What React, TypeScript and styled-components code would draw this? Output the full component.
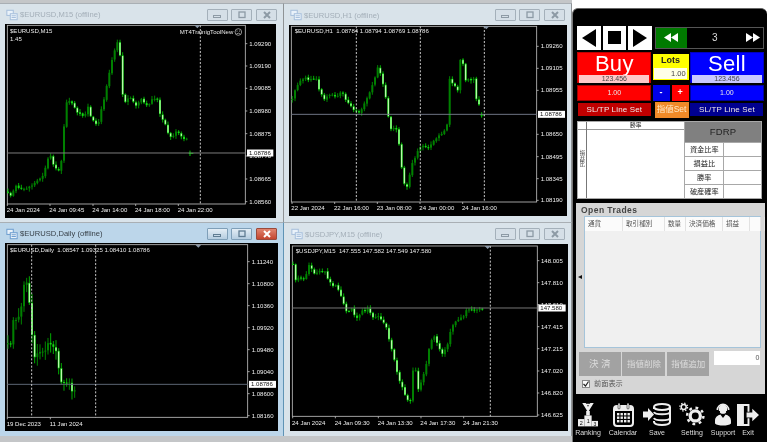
import React from "react";
import styled, { createGlobalStyle } from "styled-components";

const Global = createGlobalStyle`
  html, body { margin: 0; padding: 0; background: #c4c6c8; }
  * { box-sizing: border-box; }
`;

const CJK = `"Liberation Sans", "Noto Sans CJK JP", sans-serif`;

const Page = styled.div`
  width: 768px;
  height: 442px;
  display: flex;
  overflow: hidden;
  filter: blur(0.28px);
  font-family: ${CJK};
  background: #c4c6c8;
`;

const Workspace = styled.div`
  width: 572px;
  display: grid;
  grid-template-columns: 284px 288px;
  grid-template-rows: 219px 214px;
  padding-top: 3px;
  background: #c4c6c8;
  align-content: start;
`;

const Win = styled.div<{ $active?: boolean; $left: number }>`
  display: flex;
  flex-direction: column;
  padding-left: ${(p) => p.$left}px;
  background: ${(p) => (p.$active ? "#bcd6ea" : "#d9e3ea")};
  border-right: 1px solid ${(p) => (p.$active ? "#5f93b5" : "#8f9396")};
  border-top: 1px solid #a9afb4;
`;

const TitleBar = styled.div<{ $h: number }>`
  height: ${(p) => p.$h}px;
  display: flex;
  align-items: center;
  gap: 2px;
  padding: 1px 6px 0 1px;
  flex: none;
`;

const TitleText = styled.span<{ $active?: boolean }>`
  font-size: 7.6px;
  color: ${(p) => (p.$active ? "#39424a" : "#a3aeb8")};
  flex: 1;
  white-space: nowrap;
`;

const WinBtn = styled.div<{ $close?: boolean; $active?: boolean }>`
  width: 21px;
  height: 12px;
  margin-left: 1.7px;
  border: 1px solid ${(p) => (p.$close ? "#9a4a3c" : p.$active ? "#7f9fb8" : "#a4b0ba")};
  border-radius: 1px;
  background: ${(p) =>
    p.$close ? "linear-gradient(#e0846f, #c4452f)" : p.$active ? "linear-gradient(#e3edf5, #b5cde0)" : "#d5dfe7"};
  display: flex;
  align-items: center;
  justify-content: center;
`;

const ChartSvg = styled.svg`
  display: block;
  flex: none;
  background: #000;
`;

type Pt = [number, number];
type ChartDef = {
  title: string;
  active?: boolean;
  left: number;
  titleH: number;
  view: [number, number, number, number];
  plot: [number, number, number, number];
  labels: [number, string][];
  labelX: number;
  ask: [number, number, string];
  askX: [number, number];
  dots: number[];
  tri: number;
  head: [number, number, string];
  times: [number, string][];
  timeY: number;
  pts: Pt[];
  tiny?: Pt;
  extra?: boolean;
  hline: string;
  wick?: number;
};

function rng(seed: number) {
  let s = seed;
  return () => {
    s = (s * 9301 + 49297) % 233280;
    return s / 233280;
  };
}

function candles(pts: Pt[], seed: number, wick: number) {
  const r = rng(seed);
  const out: { x: number; o: number; c: number; h: number; l: number }[] = [];
  const yAt = (x: number) => {
    for (let i = 1; i < pts.length; i++) {
      if (x <= pts[i][0]) {
        const [x0, y0] = pts[i - 1];
        const [x1, y1] = pts[i];
        return y0 + ((y1 - y0) * (x - x0)) / (x1 - x0 || 1);
      }
    }
    return pts[pts.length - 1][1];
  };
  const end = pts[pts.length - 1][0];
  let prev = yAt(pts[0][0]);
  for (let x = pts[0][0]; x <= end; x += 8) {
    const target = yAt(x) + (r() - 0.5) * 9;
    const top = Math.min(prev, target);
    const bot = Math.max(prev, target);
    out.push({ x, o: prev, c: target, h: top - (2 + r() * 8) * wick, l: bot + (2 + r() * 8) * wick });
    prev = target + (r() - 0.5) * 3;
  }
  return out;
}

const Chart = ({ d, seed }: { d: ChartDef; seed: number }) => {
  const [vx, vy, vw, vh] = d.view;
  const [px0, py0, px1, py1] = d.plot;
  const cs = candles(d.pts, seed, d.wick ?? 1);
  const askY = d.ask[0];
  return (
    <ChartSvg width={vw / 3} height={vh / 3} viewBox={`${vx} ${vy} ${vw} ${vh}`} fontFamily="Liberation Sans, sans-serif" fontSize="18.2">
      <rect x={px0} y={py0} width={px1 - px0} height={py1 - py0} fill="none" stroke="#b8b8b8" strokeWidth="2.6" />
      {cs.map((c, i) => {
        const up = c.c < c.o;
        const t = Math.min(c.o, c.c);
        const h = Math.max(Math.abs(c.c - c.o), 3);
        return (
          <g key={i}>
            <line x1={c.x} x2={c.x} y1={c.h} y2={c.l} stroke={up ? "#009a00" : "#00c800"} strokeWidth="2.6" />
            <rect x={c.x - 3} y={t} width="6" height={h} fill={up ? "#008000" : "#14d814"} />
            {!up && h > 8 && <rect x={c.x - 1.5} y={t + 2} width="3" height={h - 4} fill="#d8ffc8" />}
          </g>
        );
      })}
      {d.tiny && (
        <g>
          <line x1={d.tiny[0]} x2={d.tiny[0]} y1={d.tiny[1] - 8} y2={d.tiny[1] + 8} stroke="#00d000" strokeWidth="3" />
          <line x1={d.tiny[0] - 4} x2={d.tiny[0] + 10} y1={d.tiny[1]} y2={d.tiny[1]} stroke="#00d000" strokeWidth="3" />
        </g>
      )}
      <line x1={px0} x2={px1} y1={askY} y2={askY} stroke={d.hline} strokeWidth="3" />
      {d.dots.map((x) => (
        <line key={x} x1={x} x2={x} y1={py0} y2={py1} stroke="#c8c8c8" strokeWidth="3" strokeDasharray="6 5" />
      ))}
      <polygon points={`${d.tri - 9},${py0} ${d.tri + 9},${py0} ${d.tri},${py0 + 9}`} fill="#8a98a8" />
      {d.labels.map(([y, t]) => (
        <g key={t}>
          <line x1={px1} x2={px1 + 6} y1={y} y2={y} stroke="#b8b8b8" strokeWidth="2.6" />
          <text x={d.labelX} y={y + 6} fill="#f0f0f0">{t}</text>
        </g>
      ))}
      <rect x={d.askX[0]} y={askY - 10.5} width={d.askX[1] - d.askX[0]} height="21" fill="#fff" />
      <text x={d.askX[0] + 6} y={askY + 6} fill="#111">{d.ask[2]}</text>
      {d.times.map(([x, t]) => (
        <g key={t}>
          <line x1={x + 2} x2={x + 2} y1={py1} y2={py1 + 6} stroke="#b8b8b8" strokeWidth="2.6" />
          <text x={x} y={d.timeY} fill="#f0f0f0">{t}</text>
        </g>
      ))}
      <text x={d.head[0]} y={d.head[1]} fill="#e8e8e8" xmlSpace="preserve">{d.head[2]}</text>
      {d.extra && (
        <g fill="#e8e8e8">
          <text x="30" y="124">1.45</text>
          <text x="700" y="101" textAnchor="end">MT4TrainigToolNew</text>
          <circle cx="715" cy="96" r="10" fill="none" stroke="#d0d0d0" strokeWidth="2" />
          <circle cx="711" cy="93" r="1.5" />
          <circle cx="719" cy="93" r="1.5" />
          <path d="M709 102q6-5 12 0" fill="none" stroke="#d0d0d0" strokeWidth="2" />
        </g>
      )}
    </ChartSvg>
  );
};

const charts: ChartDef[] = [
  {
    title: "$EURUSD,M15 (offline)", left: 5, titleH: 20,
    view: [15, 72, 813, 583], plot: [22, 76, 736, 612], labelX: 748,
    labels: [[131, "1.09290"], [198, "1.09190"], [265, "1.09085"], [333, "1.08980"], [401, "1.08875"], [468, "1.08770"], [537, "1.08665"], [605, "1.08560"]],
    ask: [459, 0, "1.08786"], askX: [741, 820], dots: [601], tri: 592,
    head: [30, 98, "$EURUSD,M15"], timeY: 637,
    times: [[20, "24 Jan 2024"], [148, "24 Jan 09:45"], [277, "24 Jan 14:00"], [405, "24 Jan 18:00"], [533, "24 Jan 22:00"]],
    pts: [[24, 575], [35, 587], [45, 555], [60, 572], [90, 560], [110, 545], [128, 525], [140, 490], [150, 460], [160, 490], [168, 510], [175, 515], [184, 480], [190, 395], [200, 310], [215, 305], [230, 340], [250, 350], [265, 320], [275, 365], [295, 370], [300, 350], [312, 295], [325, 230], [338, 170], [350, 125], [358, 125], [366, 280], [378, 310], [390, 285], [405, 320], [425, 300], [440, 320], [455, 300], [470, 290], [480, 345], [495, 375], [510, 415], [520, 405], [532, 395], [545, 415], [560, 420]],
    tiny: [570, 460], extra: true, hline: "#7c7c7c",
  },
  {
    title: "$EURUSD,H1 (offline)", left: 5, titleH: 21,
    view: [28, 75, 834, 573], plot: [35, 79, 771, 606], labelX: 783,
    labels: [[139, "1.09260"], [205, "1.09105"], [271, "1.08955"], [403, "1.08650"], [470, "1.08495"], [536, "1.08345"], [601, "1.08190"]],
    ask: [343, 0, "1.08786"], askX: [775, 856], dots: [230, 422, 614], tri: 620,
    head: [45, 100, "$EURUSD,H1  1.08784 1.08794 1.08769 1.08786"], timeY: 631,
    times: [[35, "22 Jan 2024"], [163, "22 Jan 16:00"], [291, "23 Jan 08:00"], [419, "24 Jan 00:00"], [547, "24 Jan 16:00"]],
    pts: [[38, 300], [50, 260], [70, 235], [90, 240], [108, 232], [120, 275], [135, 300], [150, 285], [170, 290], [185, 270], [200, 300], [215, 325], [240, 340], [255, 310], [275, 270], [295, 200], [310, 250], [320, 300], [330, 385], [350, 390], [360, 440], [370, 540], [380, 565], [395, 500], [415, 450], [430, 435], [445, 440], [465, 420], [490, 395], [505, 370], [510, 235], [525, 260], [535, 270], [545, 140], [555, 240], [570, 240], [582, 240], [590, 300], [598, 315]],
    tiny: [606, 345], hline: "#6e7484",
  },
  {
    title: "$EURUSD,Daily (offline)", active: true, left: 5, titleH: 20, wick: 3,
    view: [15, 68, 820, 565], plot: [22, 73, 743, 591], labelX: 755,
    labels: [[124, "1.11240"], [190, "1.10800"], [256, "1.10360"], [322, "1.09920"], [388, "1.09480"], [454, "1.09040"], [520, "1.08600"], [586, "1.08160"]],
    ask: [492, 0, "1.08786"], askX: [747, 828], dots: [95, 287], tri: 595,
    head: [30, 96, "$EURUSD,Daily  1.08547 1.09325 1.08410 1.08786"], timeY: 616,
    times: [[20, "19 Dec 2023"], [149, "11 Jan 2024"]],
    pts: [[24, 370], [35, 370], [40, 300], [55, 290], [62, 280], [72, 190], [80, 190], [88, 250], [95, 330], [102, 410], [112, 400], [125, 395], [135, 395], [145, 370], [158, 375], [168, 390], [175, 430], [180, 490], [195, 490], [205, 480], [215, 510], [225, 510]],
    hline: "#5c6674",
  },
  {
    title: "$USDJPY,M15 (offline)", left: 6, titleH: 21,
    view: [31, 70, 833, 560], plot: [38, 76, 773, 587], labelX: 784,
    labels: [[120, "148.005"], [186, "147.810"], [252, "147.610"], [318, "147.415"], [384, "147.215"], [451, "147.020"], [517, "146.820"], [583, "146.625"]],
    ask: [262, 0, "147.580"], askX: [776, 858], dots: [632], tri: 624,
    head: [48, 97, "$USDJPY,M15  147.555 147.582 147.549 147.580"], timeY: 612,
    times: [[37, "24 Jan 2024"], [165, "24 Jan 09:30"], [294, "24 Jan 13:30"], [422, "24 Jan 17:30"], [550, "24 Jan 21:30"]],
    pts: [[40, 130], [48, 175], [65, 170], [75, 180], [90, 130], [105, 160], [120, 155], [135, 155], [155, 195], [165, 190], [180, 215], [190, 240], [200, 275], [215, 260], [230, 295], [245, 275], [265, 265], [280, 290], [300, 290], [318, 315], [330, 365], [345, 420], [355, 465], [370, 510], [385, 545], [392, 545], [403, 410], [415, 510], [425, 480], [438, 440], [450, 370], [465, 345], [480, 385], [490, 400], [505, 370], [515, 325], [535, 295], [552, 285], [560, 265], [580, 265], [600, 262], [610, 265]],
    hline: "#767676",
  },
];

const AppIcon = ({ active }: { active?: boolean }) => (
  <svg width="12" height="12" viewBox="0 0 14 14" fill="none" stroke={active ? "#6f9fd0" : "#a8c0dc"} strokeWidth="1.2" style={{ flex: "none" }}>
    <rect x="1" y="1.5" width="7.5" height="6" fill="#eaf2fa" />
    <rect x="5" y="5.5" width="8" height="7" fill="#eaf2fa" />
    <path d="M6.5 8h5M6.5 10h5" />
  </svg>
);

const Glyph = ({ kind, active }: { kind: "min" | "max" | "close"; active?: boolean }) => {
  const c = kind === "close" && active ? "#fff" : active ? "#5f7c92" : "#8d9aa5";
  return (
    <svg width="10" height="8" viewBox="0 0 10 8">
      {kind === "min" && <rect x="1.5" y="4.5" width="7" height="2" fill="none" stroke={c} />}
      {kind === "max" && <rect x="2" y="1" width="6" height="5.5" fill="none" stroke={c} strokeWidth="1.3" />}
      {kind === "close" && <path d="M2 1l6 6M8 1L2 7" stroke={c} strokeWidth="2" />}
    </svg>
  );
};

/* ---------- side panel ---------- */

const Side = styled.div`
  width: 196px;
  height: 442px;
  background: #fff;
  padding-top: 8px;
  flex: none;
`;

const Panel = styled.div`
  width: 195px;
  height: 434px;
  background: #000;
  border-radius: 6px 6px 0 0;
  border-left: 1px solid #777;
  border-top: 1px solid #666;
  padding: 16px 3px 0 4px;
  display: flex;
  flex-direction: column;
`;

const Transport = styled.div`
  display: flex;
  align-items: center;
  gap: 1.6px;
  height: 25px;
  padding-left: 0.3px;
`;

const TBtn = styled.button`
  width: 24px;
  height: 24px;
  padding: 0;
  border: none;
  background: #fff;
  display: flex;
  align-items: center;
  justify-content: center;
`;

const Seek = styled.div`
  margin-left: 1.5px;
  width: 110.5px;
  height: 22px;
  border: 1px solid #555;
  display: flex;
  align-items: center;
  background: #000;
`;

const SeekGreen = styled.div`
  width: 31px;
  height: 100%;
  background: #007a00;
  display: flex;
  align-items: center;
  justify-content: center;
`;

const SeekNum = styled.div`
  flex: 1;
  text-align: center;
  color: #ddd;
  font-size: 10px;
`;

const SeekEnd = styled.div`
  width: 20px;
  display: flex;
  align-items: center;
  justify-content: center;
`;

const Trade = styled.div`
  margin-top: 2px;
  display: grid;
  grid-template-columns: 74px 36px 74px;
  grid-template-rows: 31px 16px 14px;
  column-gap: 1.3px;
  row-gap: 2px;
  padding-left: 0.3px;
`;

const BigBtn = styled.div<{ $bg: string; $soft: string }>`
  background: ${(p) => p.$bg};
  display: flex;
  flex-direction: column;
  align-items: stretch;
  padding: 0 1px 0.5px;
  border: 0.5px solid ${(p) => p.$soft};
`;

const BigLabel = styled.div`
  flex: 1;
  color: #fff;
  font-size: 22px;
  line-height: 22px;
  letter-spacing: 0.3px;
  text-align: center;
`;

const Quote = styled.div<{ $bg: string }>`
  height: 8px;
  line-height: 8px;
  background: ${(p) => p.$bg};
  color: #444;
  font-size: 7px;
  text-align: center;
`;

const Lots = styled.div`
  margin: 2px 0 3px;
  background: #ffff00;
  padding: 1px 1.5px;
  display: flex;
  flex-direction: column;
`;

const LotsLabel = styled.div`
  flex: 1;
  font-size: 9px;
  font-weight: bold;
  line-height: 11px;
  text-align: center;
  color: #222;
`;

const LotsValue = styled.div`
  height: 11px;
  line-height: 11px;
  background: #ffffe8;
  font-size: 7.5px;
  text-align: right;
  padding-right: 1.5px;
  color: #444;
`;

const Amount = styled.div<{ $bg: string; $line: string }>`
  background: ${(p) => p.$bg};
  border: 1px solid ${(p) => p.$line};
  color: #e8e8e8;
  font-size: 7px;
  text-align: center;
  line-height: 14px;
`;

const Steps = styled.div`
  display: flex;
  justify-content: space-between;
`;

const Step = styled.div<{ $bg: string }>`
  width: 17px;
  background: ${(p) => p.$bg};
  color: #fff;
  font-size: 9px;
  font-weight: bold;
  text-align: center;
  line-height: 15px;
`;

const LineSet = styled.div<{ $bg: string }>`
  background: ${(p) => p.$bg};
  color: #f0e8e8;
  font-size: 8px;
  letter-spacing: 0.15px;
  line-height: 13px;
  text-align: center;
  margin: 0 0.5px 1px;
  white-space: nowrap;
`;

const OrangeSet = styled.div`
  margin: -1px 0 -1px 2px;
  background: #f08a28;
  color: #ffe9c8;
  font-size: 8.5px;
  line-height: 15px;
  text-align: center;
  white-space: nowrap;
  overflow: hidden;
`;

const Stats = styled.div`
  margin: 3.5px 0 0 0.3px;
  width: 184.5px;
  height: 78px;
  background: #a8a8a8;
  display: flex;
  gap: 1px;
  padding: 1px;
`;

const Matrix = styled.div`
  width: 106px;
  background: #fff;
  display: grid;
  grid-template-columns: 8px 1px 1fr;
  grid-template-rows: 7px 1px 1fr;
`;

const MatrixHead = styled.div`
  grid-column: 3;
  font-size: 5.7px;
  line-height: 7px;
  text-align: center;
  color: #222;
`;

const MatrixRule = styled.div`
  grid-column: 1 / 4;
  grid-row: 2;
  background: #999;
`;

const MatrixSide = styled.div`
  grid-column: 1;
  grid-row: 3;
  font-size: 5.2px;
  line-height: 5.5px;
  color: #333;
  display: flex;
  align-items: center;
  justify-content: center;
  text-align: center;
  padding-bottom: 8px;
`;

const MatrixBar = styled.div`
  grid-column: 2;
  grid-row: 1 / 4;
  background: #777;
`;

const Metrics = styled.div`
  flex: 1;
  display: flex;
  flex-direction: column;
  gap: 1px;
`;

const Fdrp = styled.div`
  height: 20.5px;
  background: #808080;
  color: #222;
  font-size: 9.5px;
  text-align: center;
  line-height: 20.5px;
  letter-spacing: 0.2px;
`;

const MetricRow = styled.div`
  flex: 1;
  display: grid;
  grid-template-columns: 38px 1fr;
  gap: 1px;
`;

const MetricName = styled.div`
  background: #fff;
  font-size: 7.2px;
  color: #222;
  display: flex;
  align-items: center;
  justify-content: center;
`;

const MetricValue = styled.div`
  background: #fff;
`;

const Orders = styled.div`
  margin: 4.5px 0 0 -1px;
  width: 189px;
  height: 191px;
  background: #d6d6d6;
  padding: 1.5px 4px 0 2px;
  display: flex;
  flex-direction: column;
`;

const OrdersTitle = styled.div`
  font-size: 8.5px;
  font-weight: bold;
  color: #444;
  letter-spacing: 0.45px;
  line-height: 11px;
  padding-left: 3px;
`;

const ListWrap = styled.div`
  position: relative;
  margin-left: 6px;
  height: 132.5px;
  border: 1px solid #a5c4da;
  background: #f0f0f0;
`;

const ListArrow = styled.div`
  position: absolute;
  left: -7px;
  top: 58px;
  width: 0;
  height: 0;
  border: 2.5px solid transparent;
  border-right: 4px solid #111;
  border-left: none;
`;

const ListHead = styled.div`
  height: 14px;
  background: #fbfbfb;
  display: grid;
  grid-template-columns: 38px 42px 21px 37px 27px 11px 1fr;
`;

const ListCol = styled.div`
  border-right: 1px solid #e2e2e2;
  font-size: 6.6px;
  line-height: 14px;
  color: #555;
  text-align: left;
  padding-left: 3px;
  white-space: nowrap;
  overflow: hidden;
`;

const ActionRow = styled.div`
  margin-top: 3.5px;
  display: flex;
  align-items: flex-start;
  padding-left: 0.5px;
`;

const Action = styled.div<{ $w: number; $wide?: boolean }>`
  width: ${(p) => p.$w}px;
  height: 24px;
  margin-right: 1.4px;
  background: #a2a2a2;
  color: #dcdcdc;
  font-size: ${(p) => (p.$wide ? 9.5 : 8.5)}px;
  line-height: 24px;
  text-align: center;
  white-space: pre;
`;

const Qty = styled.div`
  margin: -1px 0 0 3.5px;
  width: 46px;
  height: 14px;
  background: #fff;
  color: #555;
  font-size: 7px;
  text-align: right;
  line-height: 13px;
  padding-right: 1px;
`;

const Front = styled.label`
  margin-top: 4px;
  padding-left: 4px;
  display: flex;
  align-items: center;
  gap: 4px;
  font-size: 7.2px;
  line-height: 8px;
  color: #555;
`;

const Check = styled.span`
  width: 8px;
  height: 8px;
  background: #fafafa;
  border: 1px solid #888;
  display: flex;
  align-items: center;
  justify-content: center;
`;

const Dock = styled.div`
  margin-top: 7px;
  margin-left: -1px;
  display: grid;
  grid-template-columns: 24px 46px 22px 48px 14px 36px;
  height: 38px;
`;

const DockItem = styled.div`
  display: flex;
  flex-direction: column;
  align-items: center;
  justify-content: flex-end;
  height: 36px;
  min-width: 0;
`;

const DockLabel = styled.div`
  color: #ddd;
  font-size: 7px;
  line-height: 9px;
  white-space: nowrap;
  flex: none;
`;

const DockSlot = styled.div`
  flex: 1;
  display: flex;
  align-items: center;
  justify-content: center;
  width: 0;
  overflow: visible;
`;

const RankIcon = () => (
  <svg width="20" height="24" viewBox="0 0 22 25" style={{ flex: "none" }} fill="#eee">
    <path d="M6 0l5 8 5-8h-2l-3 5-3-5zM7 1h8l-4 6z" fill="none" stroke="#eee" strokeWidth="1.5" />
    <rect x="9" y="8" width="4" height="5" />
    <rect x="7" y="13" width="8" height="12" />
    <rect x="0" y="17" width="7" height="8" />
    <rect x="15" y="19" width="7" height="6" />
    <text x="2" y="23.5" fontSize="6" fill="#000" fontFamily="Liberation Sans">2</text>
    <text x="9.5" y="21" fontSize="6" fill="#000" fontFamily="Liberation Sans">1</text>
    <text x="17" y="24.5" fontSize="5.5" fill="#000" fontFamily="Liberation Sans">3</text>
  </svg>
);

const CalIcon = () => (
  <svg width="21" height="24" viewBox="0 0 21 24" style={{ flex: "none" }}>
    <rect x="1" y="3" width="19" height="20" rx="3" fill="none" stroke="#eee" strokeWidth="2" />
    <rect x="1" y="3" width="19" height="5" fill="#eee" />
    <rect x="5" y="0" width="2" height="6" rx="1" fill="#eee" stroke="#000" strokeWidth=".5" />
    <rect x="14" y="0" width="2" height="6" rx="1" fill="#eee" stroke="#000" strokeWidth=".5" />
    {[10, 13.5, 17].map((y) =>
      [4, 7.5, 11, 14.5].map((x) => <rect key={`${x}${y}`} x={x} y={y} width="2.4" height="2.4" fill="#eee" />)
    )}
  </svg>
);

const SaveIcon = () => (
  <svg width="28" height="23" viewBox="0 0 28 23" style={{ flex: "none" }}>
    <g fill="none" stroke="#eee" strokeWidth="2">
      <ellipse cx="19" cy="4" rx="8" ry="3" />
      <path d="M11 9c1 3 15 3 16 0M11 15c1 3 15 3 16 0M11 4v2M27 4v15c-1 4-15 4-16 0v-1" />
    </g>
    <path d="M0 8.5h5V5l6 6.5-6 6.5v-3.5H0z" fill="#eee" />
  </svg>
);

const GearIcon = () => (
  <svg width="27" height="25" viewBox="0 0 28 27" style={{ flex: "none" }} fill="none" stroke="#eee">
    <circle cx="4.5" cy="5.5" r="2.7" strokeWidth="1.6" />
    <circle cx="4.5" cy="5.5" r="4.2" strokeWidth="1.4" strokeDasharray="1.5 1.8" />
    <circle cx="17" cy="15" r="5.5" strokeWidth="3.5" />
    <circle cx="17" cy="15" r="8.8" strokeWidth="2.6" strokeDasharray="3 3.9" />
  </svg>
);

const SupportIcon = () => (
  <svg width="18" height="24" viewBox="0 0 20 27" style={{ flex: "none" }}>
    <circle cx="10" cy="6.5" r="5" fill="#eee" />
    <path d="M3.5 8a6.5 6.5 0 0 1 13 0" fill="none" stroke="#eee" strokeWidth="1.6" />
    <path d="M3 9h14v2H3z" fill="#000" />
    <ellipse cx="10" cy="10" rx="3.5" ry="2" fill="#eee" />
    <path d="M1 20c0-4 3-6 6-7l3 4 3-4c3 1 6 3 6 7v3c-3 3-15 3-18 0z" fill="#eee" />
  </svg>
);

const ExitIcon = () => (
  <svg width="22" height="22" viewBox="0 0 23 23" style={{ flex: "none" }} fill="#eee">
    <path d="M0 0h13v8h-2V2H7v19h4v-6h2v8H0z" />
    <path d="M0 0l7 2v21l-7-2z" />
    <path d="M10 9h6V5l7 6.5-7 6.5v-4h-6z" />
  </svg>
);

const Tri = ({ dir }: { dir: "l" | "r" }) => (
  <svg width="16" height="18" viewBox="0 0 16 18">
    <polygon points={dir === "l" ? "15,0 15,18 1,9" : "1,0 1,18 15,9"} fill="#000" />
  </svg>
);

const Dbl = ({ dir }: { dir: "l" | "r" }) => (
  <svg width="14" height="9" viewBox="0 0 14 9">
    <polygon points={dir === "l" ? "7,0 7,9 0,4.5" : "0,0 0,9 7,4.5"} fill="#fff" />
    <polygon points={dir === "l" ? "14,0 14,9 7,4.5" : "7,0 7,9 14,4.5"} fill="#fff" />
  </svg>
);

const dock: [string, React.ReactNode][] = [
  ["Ranking", <RankIcon />],
  ["Calendar", <CalIcon />],
  ["Save", <SaveIcon />],
  ["Setting", <GearIcon />],
  ["Support", <SupportIcon />],
  ["Exit", <ExitIcon />],
];

const cols = ["通貨", "取引種別", "数量", "決済価格", "損益", "", ""];
const metrics = ["資金比率", "損益比", "勝率", "破産確率"];

export default function App() {
  return (
    <>
      <Global />
      <Page>
        <Workspace>
          {charts.map((d, i) => (
            <Win key={d.title} $active={d.active} $left={d.left}>
              <TitleBar $h={d.titleH}>
                <AppIcon active={d.active} />
                <TitleText $active={d.active}>{d.title}</TitleText>
                <WinBtn $active={d.active}><Glyph kind="min" active={d.active} /></WinBtn>
                <WinBtn $active={d.active}><Glyph kind="max" active={d.active} /></WinBtn>
                <WinBtn $active={d.active} $close={d.active}><Glyph kind="close" active={d.active} /></WinBtn>
              </TitleBar>
              <Chart d={d} seed={17 + i * 31} />
            </Win>
          ))}
        </Workspace>
        <Side>
          <Panel>
            <Transport>
              <TBtn><Tri dir="l" /></TBtn>
              <TBtn><svg width="13" height="13"><rect width="13" height="13" fill="#000" /></svg></TBtn>
              <TBtn><Tri dir="r" /></TBtn>
              <Seek>
                <SeekGreen><Dbl dir="l" /></SeekGreen>
                <SeekNum>3</SeekNum>
                <SeekEnd><Dbl dir="r" /></SeekEnd>
              </Seek>
            </Transport>
            <Trade>
              <BigBtn $bg="#ff0000" $soft="#c00000">
                <BigLabel>Buy</BigLabel>
                <Quote $bg="#ffc8c8">123.456</Quote>
              </BigBtn>
              <Lots>
                <LotsLabel>Lots</LotsLabel>
                <LotsValue>1.00</LotsValue>
              </Lots>
              <BigBtn $bg="#0000ff" $soft="#0000c0">
                <BigLabel>Sell</BigLabel>
                <Quote $bg="#c8c8ff">123.456</Quote>
              </BigBtn>
              <Amount $bg="#ff0000" $line="#a00000">1.00</Amount>
              <Steps>
                <Step $bg="#0000e8">-</Step>
                <Step $bg="#ff0000">+</Step>
              </Steps>
              <Amount $bg="#0000ff" $line="#0000a0">1.00</Amount>
              <LineSet $bg="#c00000">SL/TP Line Set</LineSet>
              <OrangeSet>指値Set</OrangeSet>
              <LineSet $bg="#000090">SL/TP Line Set</LineSet>
            </Trade>
            <Stats>
              <Matrix>
                <MatrixHead>勝率</MatrixHead>
                <MatrixRule />
                <MatrixSide>損<br />益<br />比</MatrixSide>
                <MatrixBar />
              </Matrix>
              <Metrics>
                <Fdrp>FDRP</Fdrp>
                {metrics.map((m) => (
                  <MetricRow key={m}>
                    <MetricName>{m}</MetricName>
                    <MetricValue />
                  </MetricRow>
                ))}
              </Metrics>
            </Stats>
            <Orders>
              <OrdersTitle>Open Trades</OrdersTitle>
              <ListWrap>
                <ListArrow />
                <ListHead>
                  {cols.map((c, i) => (
                    <ListCol key={i}>{c}</ListCol>
                  ))}
                </ListHead>
              </ListWrap>
              <ActionRow>
                <Action $w={42.6} $wide>{"決 済"}</Action>
                <Action $w={43}>指値削除</Action>
                <Action $w={42.6}>指値追加</Action>
                <Qty>0</Qty>
              </ActionRow>
              <Front>
                <Check>
                  <svg width="6" height="6" viewBox="0 0 6 6"><path d="M.5 3l2 2L5.5 .5" fill="none" stroke="#222" strokeWidth="1.2" /></svg>
                </Check>
                前面表示
              </Front>
            </Orders>
            <Dock>
              {dock.map(([l, ic]) => (
                <DockItem key={l}>
                  <DockSlot>{ic}</DockSlot>
                  <DockLabel>{l}</DockLabel>
                </DockItem>
              ))}
            </Dock>
          </Panel>
        </Side>
      </Page>
    </>
  );
}
